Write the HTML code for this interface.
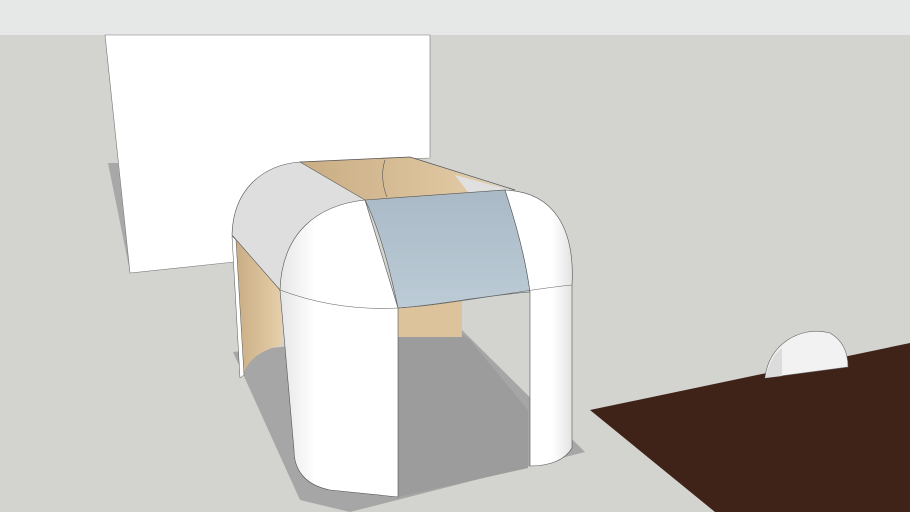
<!DOCTYPE html>
<html><head><style>
html,body{margin:0;padding:0;width:910px;height:512px;overflow:hidden;background:#d3d3cf}
</style></head><body>
<svg width="910" height="512" viewBox="0 0 910 512" xmlns="http://www.w3.org/2000/svg">
<defs>
<linearGradient id="wl" x1="0" x2="1"><stop offset="0" stop-color="#e6e6e6"/><stop offset="0.3" stop-color="#fff"/><stop offset="1" stop-color="#fff"/></linearGradient>
<linearGradient id="wr" x1="0" x2="1"><stop offset="0" stop-color="#fff"/><stop offset="0.7" stop-color="#fff"/><stop offset="1" stop-color="#e2e2e2"/></linearGradient>
<linearGradient id="bl" x1="0" y1="0" x2="0" y2="1"><stop offset="0" stop-color="#a9bac6"/><stop offset="1" stop-color="#bccbd6"/></linearGradient>
<linearGradient id="tan" x1="0" x2="1"><stop offset="0" stop-color="#c9ad84"/><stop offset="1" stop-color="#e6cfaa"/></linearGradient>
</defs>
<rect x="0" y="0" width="910" height="35" fill="#e6e8e8"/>
<rect x="0" y="35" width="910" height="477" fill="#d3d3cf"/>
<!-- back panel shadow -->
<polygon points="108,163 118,163 130,272" fill="#a8a8a8"/>
<!-- white panel -->
<polygon points="105,35 430,35 430,158 300,162 234,262 130,273" fill="#ffffff" stroke="#777" stroke-width="0.6"/>
<!-- brown ground -->
<polygon points="590,410 910,343 910,512 715,512" fill="#3f2218"/>
<!-- half dome -->
<path d="M765,378 C768,345 800,325 830,333 C842,340 848,352 848,367 Z" fill="#f2f2f2" stroke="#666" stroke-width="0.6"/>
<path d="M765,378 C770,360 776,352 782,348 L782,376 Z" fill="#dcdcdc"/>
<!-- hut floor shadow -->
<polygon points="233,352 460,328 585,452 350,512 300,500" fill="#a6a6a6"/>
<!-- interior floor -->
<path d="M398,330 C430,325 455,328 470,340 L528,410 L528,468 L398,497 Z" fill="#9c9c9c"/>
<!-- tan interior -->
<polygon points="300,162 410,157 510,190 365,200" fill="url(#tan)"/>
<path d="M236,240 L280,290 L282,345 C262,350 250,358 244,372 Z" fill="url(#tan)"/>
<path d="M232,236 L236,240 L244,375 L240,378 Z" fill="#fff" stroke="#555" stroke-width="0.5"/>
<rect x="398" y="295" width="64" height="42" fill="#dcc39b"/>
<path d="M455,175 L510,190 L470,195 Z" fill="#e0e0e0"/>
<!-- left back roof -->
<path d="M232,235 C233,190 262,165 300,162 L365,200 C320,205 288,235 280,290 Z" fill="#dedede" stroke="#555" stroke-width="0.6"/>
<path d="M385,160 C380,175 384,190 387,197" stroke="#555" stroke-width="0.6" fill="none"/>
<path d="M300,162 L410,157 L515,190" stroke="#555" stroke-width="0.8" fill="none"/>
<!-- front left white -->
<path d="M280,290 C282,232 318,205 365,200 L398,308 L398,497 L330,490 C305,485 294,470 294,450 Z" fill="url(#wl)" stroke="#555" stroke-width="0.6"/>
<!-- blue -->
<path d="M365,200 L505,190 C515,220 525,255 530,292 C480,296 440,305 398,308 C390,270 380,230 365,200 Z" fill="url(#bl)" stroke="#555" stroke-width="0.6"/>
<!-- right white -->
<path d="M505,190 C555,192 575,230 572,285 L572,448 C565,460 550,466 530,466 L530,292 C525,255 515,220 505,190 Z" fill="url(#wr)" stroke="#555" stroke-width="0.6"/>
<path d="M280,290 C320,305 360,310 398,308 C450,305 520,290 572,285" stroke="#666" stroke-width="0.6" fill="none"/>
</svg>
</body></html>
